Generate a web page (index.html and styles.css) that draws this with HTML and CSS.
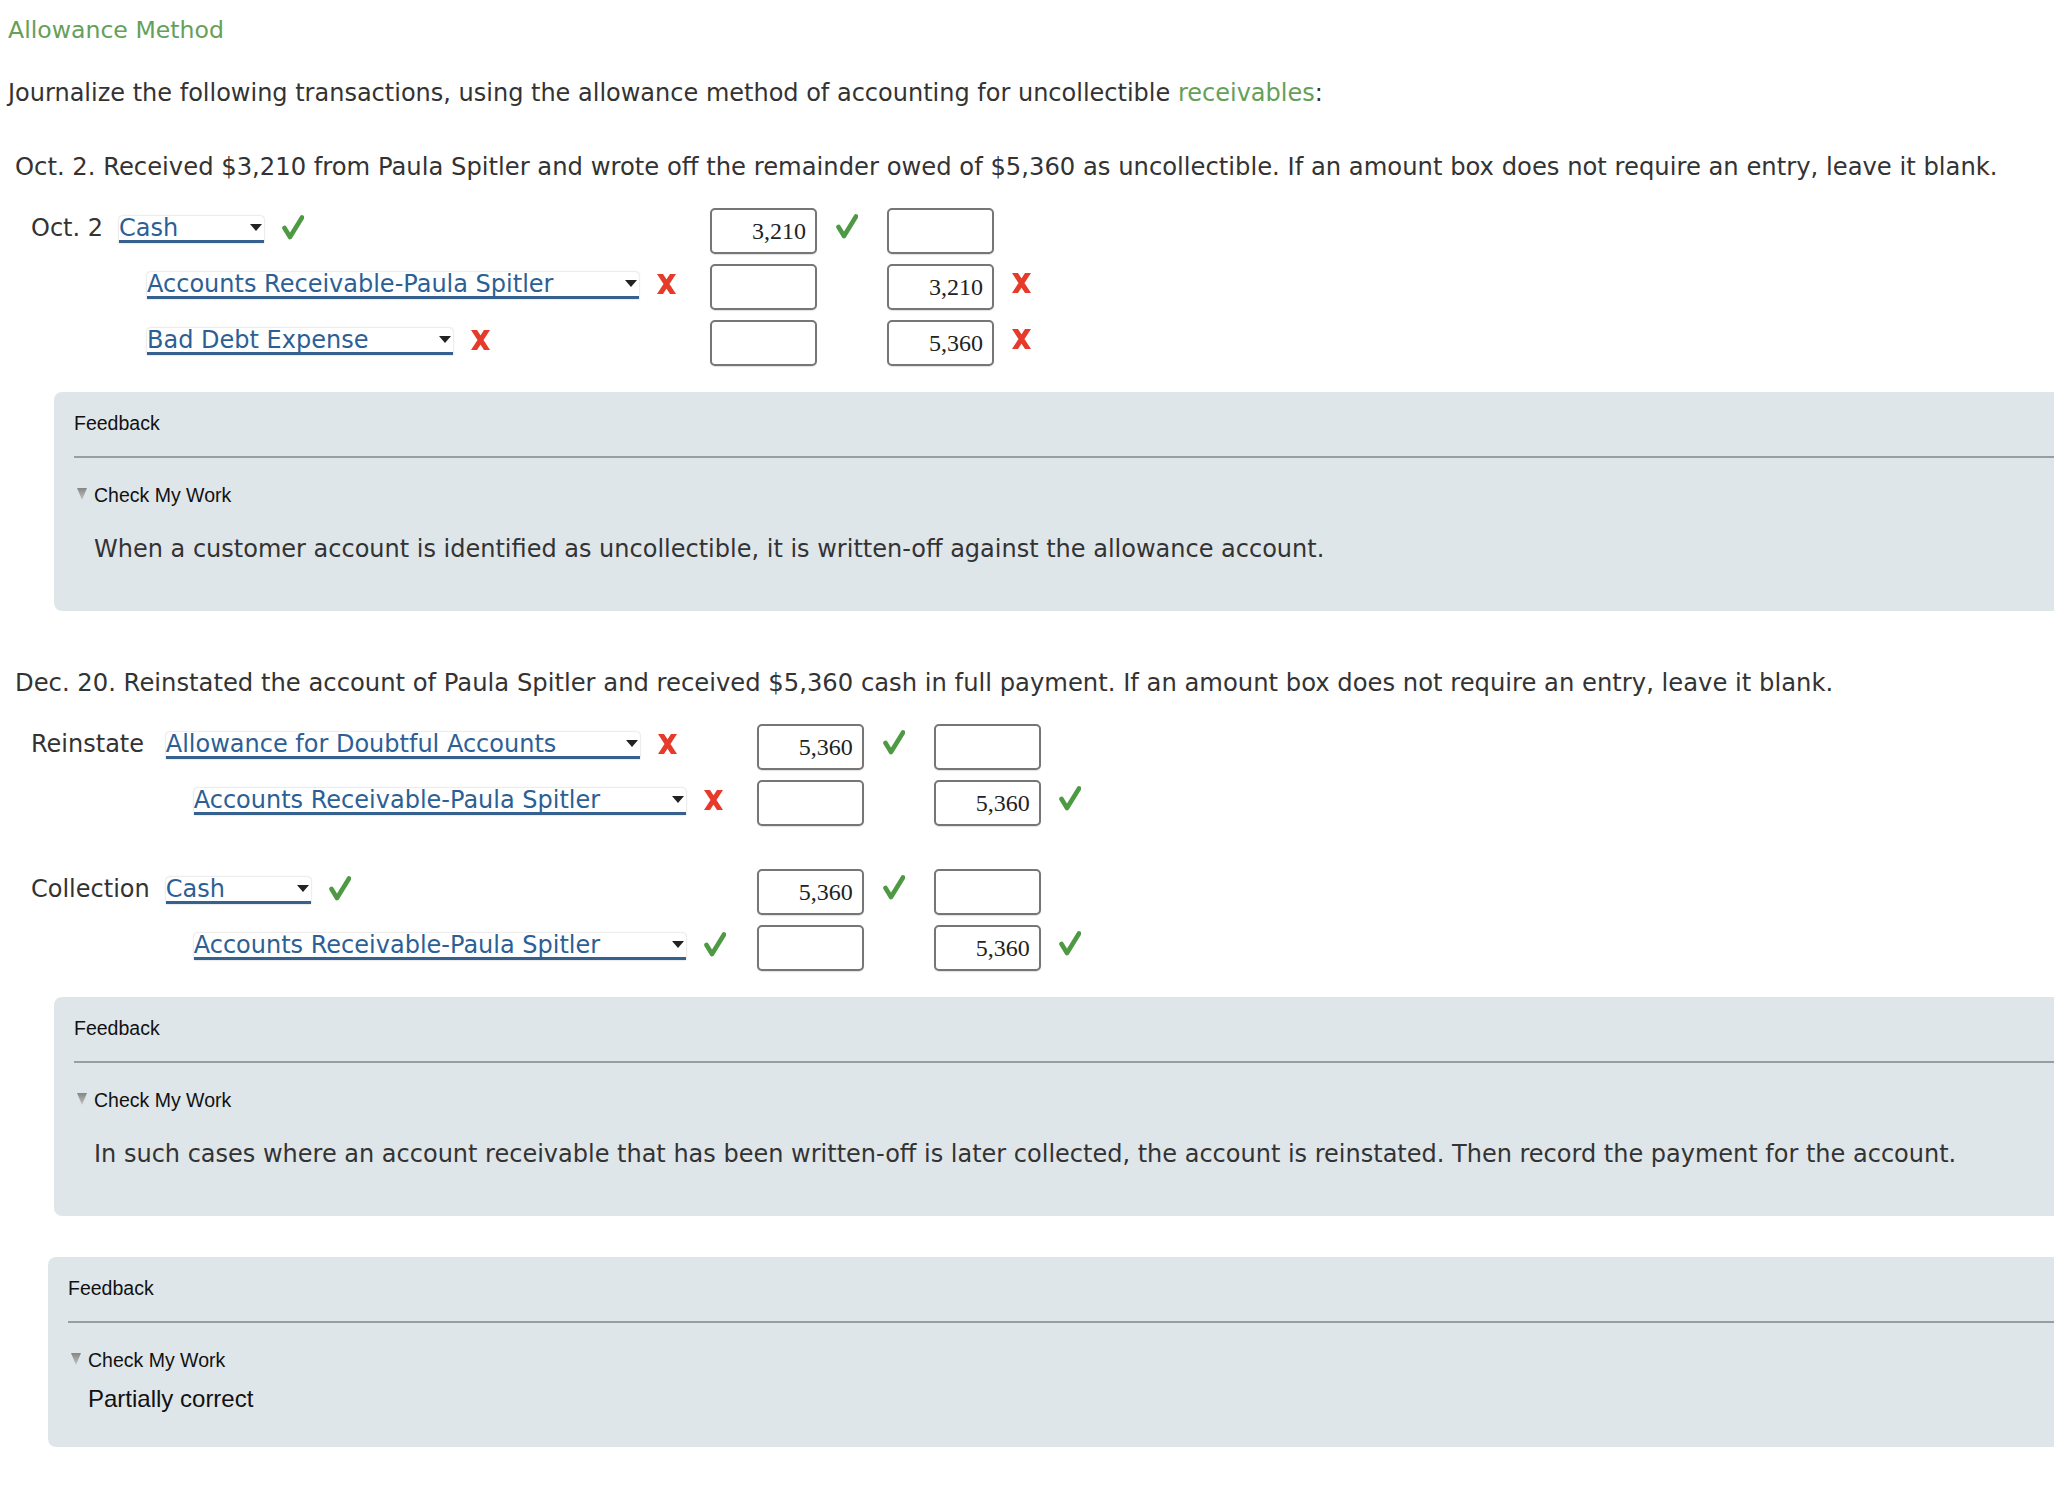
FILE: index.html
```html
<!DOCTYPE html>
<html lang="en">
<head>
<meta charset="utf-8">
<title>Allowance Method</title>
<link rel="stylesheet" href="styles.css">
</head>
<body>
<div class="page">
  <h1 class="title">Allowance Method</h1>
  <p class="intro">Journalize the following transactions, using the allowance method of accounting for uncollectible <span class="term">receivables</span>:</p>

  <p class="question">Oct. 2. Received $3,210 from Paula Spitler and wrote off the remainder owed of $5,360 as uncollectible. If an amount box does not require an entry, leave it blank.</p>
  <table class="journal">
    <tr>
      <td class="lbl"><div class="lbl-in">Oct. 2</div></td>
      <td class="acct"><div class="acct-in"><span class="sel w-cash">Cash<i class="caret"></i></span><span class="ico"><svg class="ok" viewBox="0 0 22 25"><path d="M2.5 13 L8 22 L20 2.5"/></svg></span></div></td>
      <td class="dr"><div class="amt"><div class="box">3,210</div><span class="slot"><svg class="ok" viewBox="0 0 22 25"><path d="M2.5 13 L8 22 L20 2.5"/></svg></span></div></td>
      <td class="cr"><div class="amt"><div class="box"></div><span class="slot"></span></div></td>
    </tr>
    <tr>
      <td class="lbl"></td>
      <td class="acct"><div class="acct-in ind"><span class="sel w-ar">Accounts Receivable-Paula Spitler<i class="caret"></i></span><span class="ico"><svg class="bad" viewBox="0 0 19 20"><path d="M0 0 H6 L19 20 H13 Z M13 0 H19 L6 20 H0 Z"/></svg></span></div></td>
      <td class="dr"><div class="amt"><div class="box"></div><span class="slot"></span></div></td>
      <td class="cr"><div class="amt"><div class="box">3,210</div><span class="slot"><svg class="bad" viewBox="0 0 19 20"><path d="M0 0 H6 L19 20 H13 Z M13 0 H19 L6 20 H0 Z"/></svg></span></div></td>
    </tr>
    <tr>
      <td class="lbl"></td>
      <td class="acct"><div class="acct-in ind"><span class="sel w-bde">Bad Debt Expense<i class="caret"></i></span><span class="ico"><svg class="bad" viewBox="0 0 19 20"><path d="M0 0 H6 L19 20 H13 Z M13 0 H19 L6 20 H0 Z"/></svg></span></div></td>
      <td class="dr"><div class="amt"><div class="box"></div><span class="slot"></span></div></td>
      <td class="cr"><div class="amt"><div class="box">5,360</div><span class="slot"><svg class="bad" viewBox="0 0 19 20"><path d="M0 0 H6 L19 20 H13 Z M13 0 H19 L6 20 H0 Z"/></svg></span></div></td>
    </tr>
  </table>

  <div class="feedback">
    <div class="fb-head">Feedback</div>
    <div class="cmw"><svg class="tri" viewBox="0 0 10 12"><defs><linearGradient id="g1" x1="0" y1="0" x2="0" y2="1"><stop offset="0" stop-color="#858585"/><stop offset="1" stop-color="#c4c4c4"/></linearGradient></defs><path d="M0 0 H10 L5 12 Z" fill="url(#g1)"/></svg>Check My Work</div>
    <p class="fb-text">When a customer account is identified as uncollectible, it is written-off against the allowance account.</p>
  </div>

  <p class="question q2">Dec. 20. Reinstated the account of Paula Spitler and received $5,360 cash in full payment. If an amount box does not require an entry, leave it blank.</p>
  <table class="journal">
    <tr>
      <td class="lbl"><div class="lbl-in">Reinstate</div></td>
      <td class="acct"><div class="acct-in"><span class="sel w-afda">Allowance for Doubtful Accounts<i class="caret"></i></span><span class="ico"><svg class="bad" viewBox="0 0 19 20"><path d="M0 0 H6 L19 20 H13 Z M13 0 H19 L6 20 H0 Z"/></svg></span></div></td>
      <td class="dr"><div class="amt"><div class="box">5,360</div><span class="slot"><svg class="ok" viewBox="0 0 22 25"><path d="M2.5 13 L8 22 L20 2.5"/></svg></span></div></td>
      <td class="cr"><div class="amt"><div class="box"></div><span class="slot"></span></div></td>
    </tr>
    <tr>
      <td class="lbl"></td>
      <td class="acct"><div class="acct-in ind"><span class="sel w-ar">Accounts Receivable-Paula Spitler<i class="caret"></i></span><span class="ico"><svg class="bad" viewBox="0 0 19 20"><path d="M0 0 H6 L19 20 H13 Z M13 0 H19 L6 20 H0 Z"/></svg></span></div></td>
      <td class="dr"><div class="amt"><div class="box"></div><span class="slot"></span></div></td>
      <td class="cr"><div class="amt"><div class="box">5,360</div><span class="slot"><svg class="ok" viewBox="0 0 22 25"><path d="M2.5 13 L8 22 L20 2.5"/></svg></span></div></td>
    </tr>
    <tr class="spacer"><td colspan="4"></td></tr>
    <tr>
      <td class="lbl"><div class="lbl-in">Collection</div></td>
      <td class="acct"><div class="acct-in"><span class="sel w-cash">Cash<i class="caret"></i></span><span class="ico"><svg class="ok" viewBox="0 0 22 25"><path d="M2.5 13 L8 22 L20 2.5"/></svg></span></div></td>
      <td class="dr"><div class="amt"><div class="box">5,360</div><span class="slot"><svg class="ok" viewBox="0 0 22 25"><path d="M2.5 13 L8 22 L20 2.5"/></svg></span></div></td>
      <td class="cr"><div class="amt"><div class="box"></div><span class="slot"></span></div></td>
    </tr>
    <tr>
      <td class="lbl"></td>
      <td class="acct"><div class="acct-in ind"><span class="sel w-ar">Accounts Receivable-Paula Spitler<i class="caret"></i></span><span class="ico"><svg class="ok" viewBox="0 0 22 25"><path d="M2.5 13 L8 22 L20 2.5"/></svg></span></div></td>
      <td class="dr"><div class="amt"><div class="box"></div><span class="slot"></span></div></td>
      <td class="cr"><div class="amt"><div class="box">5,360</div><span class="slot"><svg class="ok" viewBox="0 0 22 25"><path d="M2.5 13 L8 22 L20 2.5"/></svg></span></div></td>
    </tr>
  </table>

  <div class="feedback">
    <div class="fb-head">Feedback</div>
    <div class="cmw"><svg class="tri" viewBox="0 0 10 12"><defs><linearGradient id="g2" x1="0" y1="0" x2="0" y2="1"><stop offset="0" stop-color="#858585"/><stop offset="1" stop-color="#c4c4c4"/></linearGradient></defs><path d="M0 0 H10 L5 12 Z" fill="url(#g2)"/></svg>Check My Work</div>
    <p class="fb-text">In such cases where an account receivable that has been written-off is later collected, the account is reinstated. Then record the payment for the account.</p>
  </div>

  <div class="feedback summary">
    <div class="fb-head">Feedback</div>
    <div class="cmw"><svg class="tri" viewBox="0 0 10 12"><defs><linearGradient id="g3" x1="0" y1="0" x2="0" y2="1"><stop offset="0" stop-color="#858585"/><stop offset="1" stop-color="#c4c4c4"/></linearGradient></defs><path d="M0 0 H10 L5 12 Z" fill="url(#g3)"/></svg>Check My Work</div>
    <p class="partial">Partially correct</p>
  </div>
</div>
</body>
</html>
```

FILE: styles.css
```css
html, body {
  margin: 0;
  padding: 0;
  background: #ffffff;
}
body {
  font-family: "DejaVu Sans", Verdana, sans-serif;
  font-size: 24px;
  color: #333333;
  overflow-x: hidden;
}
.page {
  padding: 0 8px 40px 8px;
}
.title {
  margin: 15px 0 0 0;
  font-size: 23.6px;
  font-weight: normal;
  line-height: 30px;
  color: #65a05a;
}
.intro {
  margin: 33px 0 0 0;
  line-height: 30px;
  white-space: nowrap;
}
.term {
  color: #65a05a;
}
.question {
  margin: 44px 0 0 7px;
  font-size: 24.25px;
  line-height: 30px;
  white-space: nowrap;
}
.question.q2 {
  margin-top: 57px;
}
.journal {
  margin: 26px 0 0 23px;
  border-collapse: collapse;
  border-spacing: 0;
}
.journal td {
  padding: 0;
  height: 56px;
  vertical-align: top;
}
.journal tr.spacer td {
  height: 33px;
}
.lbl {
  padding-right: 16px !important;
  white-space: nowrap;
  color: #333333;
}
.lbl-in {
  padding-top: 8px;
  line-height: 24px;
}
.acct {
  padding-right: 31px !important;
}
.acct-in {
  display: flex;
  align-items: flex-start;
  gap: 18px;
  padding-top: 8px;
}
.acct-in.ind {
  padding-left: 28px;
}
.sel {
  position: relative;
  display: block;
  box-sizing: border-box;
  height: 27px;
  line-height: 24px;
  color: #2c5f95;
  background: #ffffff;
  border-bottom: 3px solid #36618f;
  border-radius: 4px 4px 0 0;
  box-shadow: 0 0 2px rgba(0, 0, 0, 0.28);
  white-space: nowrap;
}
.w-cash { width: 145px; }
.w-ar { width: 492px; }
.w-bde { width: 306px; }
.w-afda { width: 474px; }
.caret {
  position: absolute;
  right: 2px;
  top: 8px;
  width: 0;
  height: 0;
  border-left: 6px solid transparent;
  border-right: 6px solid transparent;
  border-top: 7px solid #222222;
}
.ico {
  display: block;
  width: 22px;
  height: 25px;
}
.ok {
  display: block;
  width: 22px;
  height: 25px;
  margin-top: -1px;
  fill: none;
  stroke: #4e9a44;
  stroke-width: 4.6;
  stroke-linecap: round;
  stroke-linejoin: round;
}
.bad {
  display: block;
  width: 19px;
  height: 20px;
  margin-top: 2px;
  fill: #e63b2b;
}
.dr {
  padding-right: 29px !important;
}
.amt {
  display: flex;
  align-items: flex-start;
}
.box {
  box-sizing: border-box;
  width: 107px;
  height: 46px;
  border: 2px solid #767676;
  border-radius: 5px;
  background: #ffffff;
  box-shadow: 0 1px 1px rgba(0, 0, 0, 0.12);
  font-family: "Liberation Serif", "Times New Roman", serif;
  font-size: 24px;
  line-height: 42px;
  text-align: right;
  padding-right: 9px;
  color: #222222;
}
.slot {
  display: block;
  width: 22px;
  height: 25px;
  margin-left: 19px;
  padding-top: 7px;
}
.cr .slot {
  margin-left: 18px;
}
.feedback {
  margin: 16px -8px 0 46px;
  padding: 19px 0 47px 20px;
  background: #dfe6ea;
  border-radius: 8px 0 0 8px;
  font-family: "Liberation Sans", Arial, sans-serif;
}
.feedback + .feedback {
  margin-top: 41px;
}
.feedback.summary {
  margin-left: 40px;
  padding-bottom: 34px;
}
.fb-head {
  font-size: 19.5px;
  line-height: 24px;
  color: #111111;
  padding-bottom: 21px;
  border-bottom: 2px solid #9a9ea2;
}
.cmw {
  display: flex;
  align-items: flex-start;
  margin-top: 25px;
  font-size: 19.5px;
  line-height: 24px;
  color: #111111;
}
.tri {
  display: block;
  width: 10px;
  height: 12px;
  margin: 5px 7px 0 3px;
}
.fb-text {
  margin: 27px 0 0 20px;
  font-family: "DejaVu Sans", Verdana, sans-serif;
  font-size: 24px;
  line-height: 30px;
  color: #333333;
  white-space: nowrap;
}
.partial {
  margin: 13px 0 0 20px;
  font-size: 24px;
  line-height: 28px;
  color: #111111;
}
```
